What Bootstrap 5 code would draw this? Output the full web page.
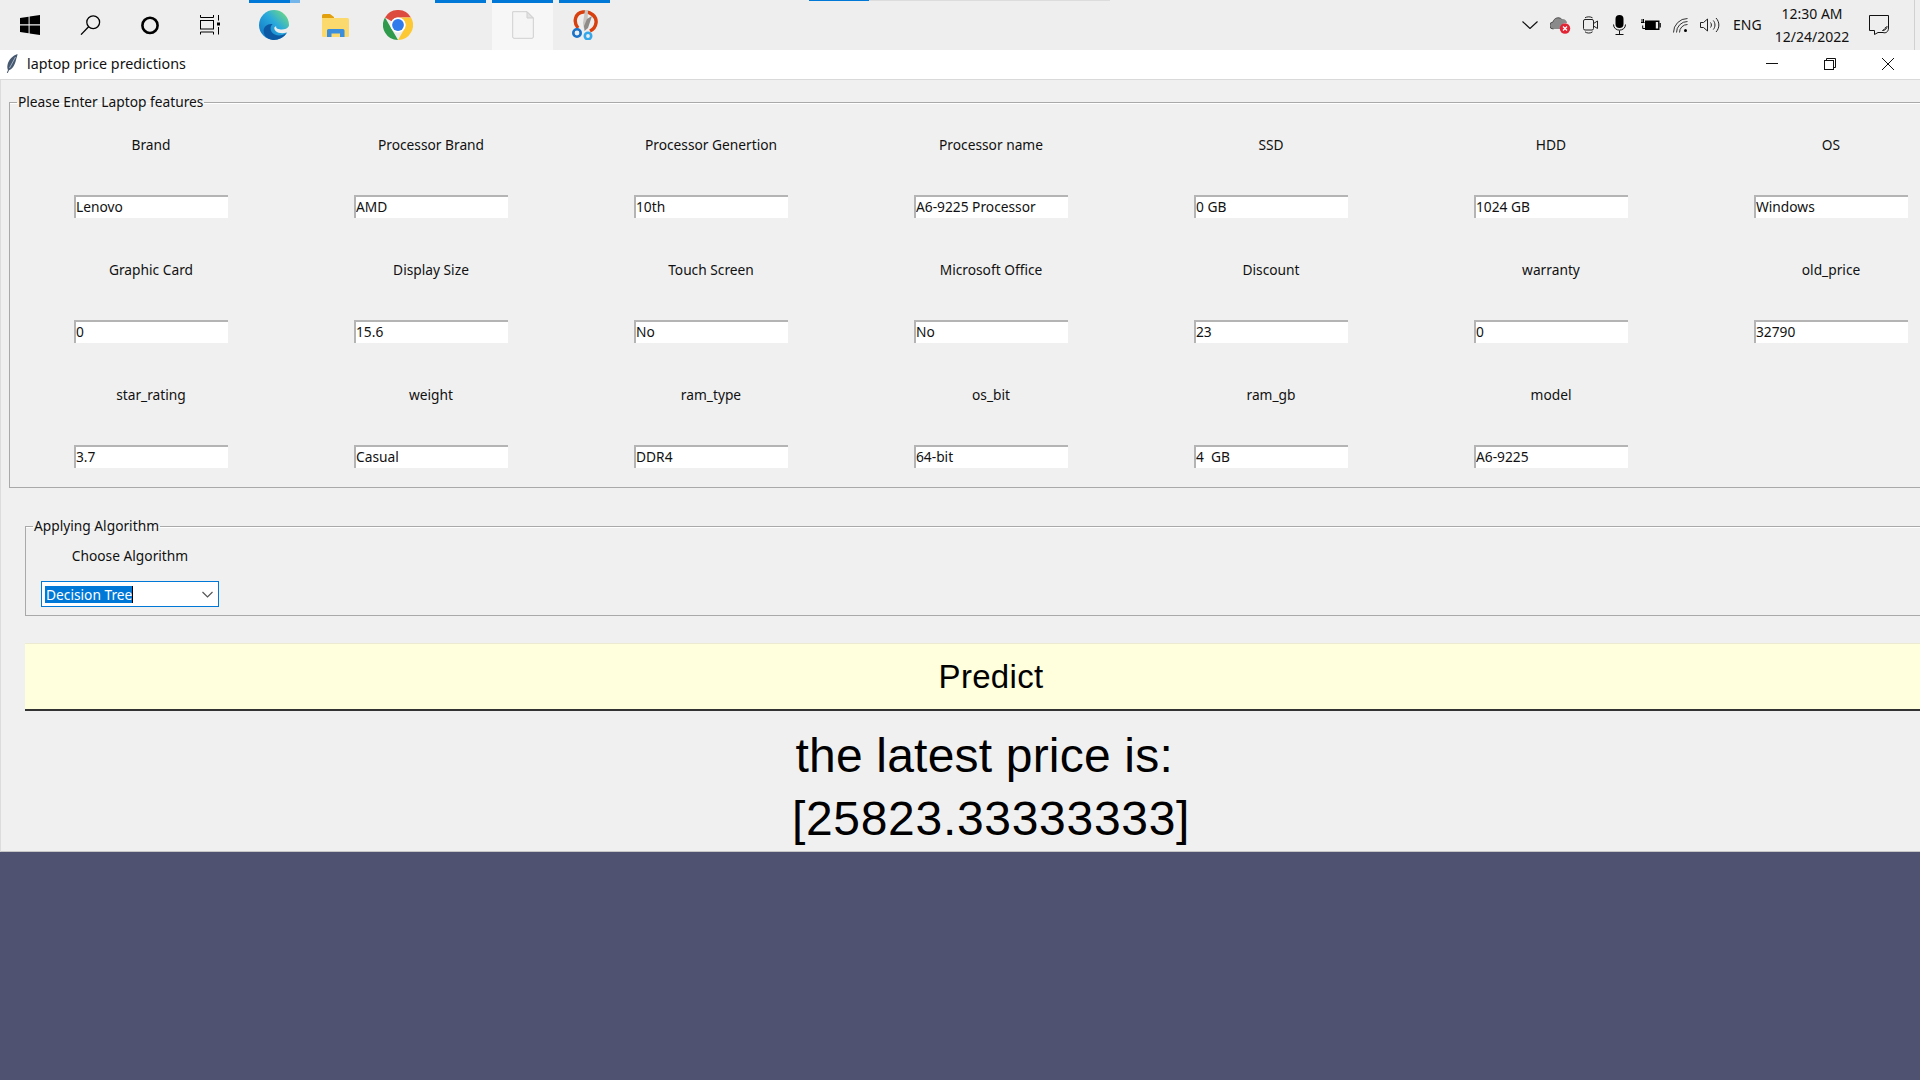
<!DOCTYPE html>
<html lang="en">
<head>
<meta charset="utf-8">
<title>laptop price predictions</title>
<link href="https://cdn.jsdelivr.net/npm/bootstrap@5.3.0/dist/css/bootstrap.min.css" rel="stylesheet">
<style>
html,body{height:100%;overflow:hidden}
body{background:#4f5270;font-family:"Noto Sans","Liberation Sans",sans-serif;font-size:13.75px;color:#111}
.shell{height:1080px;width:1920px}
.taskbar{height:50px;background:#eee;flex:none}
.slot{width:60px;height:50px;flex:none;position:relative}
.slot-app{width:61px}
.slot-first{margin-left:4px;padding-right:1px}
.slot-chrome{padding-left:2px}
.slot-gap{margin-left:3px}
.slot-active{background:#f7f7f7;margin-left:1px}
.slot-snip{margin-left:1px}
.slot-run::before{content:"";position:absolute;left:5px;right:5px;top:0;height:3px;background:#0078d7}
.slot-active::before{left:0;right:0}
.slot-edge::before{background:linear-gradient(90deg,#0078d7 80%,#74b5ea 80%)}
.progress-hint{width:301px;height:1px;margin-left:194px;align-self:flex-start;background:linear-gradient(90deg,#0078d7 60px,#dcdcdc 60px)}
.tray{gap:12px;margin-right:5px;color:#111}
.tray-eng{width:29px;font-size:14px;line-height:1;white-space:nowrap}
.tray-clock{width:80px;margin-left:-2px;font-size:14px;line-height:23px;text-align:center;white-space:nowrap}
.tray-note{margin-left:5px}
.tray-line{width:1px;height:50px;background:#d0d0d0;margin-left:13px}
.titlebar{height:30px;background:#fff;border-bottom:1px solid #d9d9d9;flex:none;padding-bottom:2px}
.title-feather{margin-left:6px;margin-right:9px}
.title-text{font-size:14.3px;line-height:18px;color:#111}
.win-controls{gap:46px;margin-right:26px}
.app-main{width:1920px;height:772px;flex:none;background:#f0f0f0;border-bottom:1px solid #c6c6c6;border-left:1px solid #dcdcdc;overflow:hidden;padding-left:8px}
.etched{border:1px solid #a9a9a9;box-shadow:inset 0 1px 0 #fff;padding:0;margin:0;flex:none;min-width:0}
.etched>legend{float:none;width:auto;font-size:13.75px;line-height:18px;margin:0 0 0 7px;padding:0 1px;color:#111}
.group-features{width:2000px;margin-top:13px;padding:0 0 19px 0}
.feature-grid{display:grid;grid-template-columns:repeat(7,280px);row-gap:43px;padding:25px 0 0 1px}
.feature{display:flex;flex-direction:column;align-items:center}
.feature-label{line-height:18px;height:18px;margin-bottom:41px;white-space:nowrap}
.entry{width:154px;height:23px;border:0;border-top:2px solid #b4b4b4;border-left:2px solid #b4b4b4;background:#fff;padding:0 0 2px 0;font:inherit;color:#111;line-height:19px;border-radius:0;outline:0}
.group-algo{width:1960px;margin:29px 0 0 16px;padding:12px 0 8px 0}
.algo-box{width:178px;margin-left:15px}
.algo-label{line-height:18px;margin-bottom:16px;text-align:center}
.combo{height:26px;border:1px solid #0078d7;background:#fff;padding:0 0 0 3px}
.combo-sel{background:#0078d7;color:#fff;line-height:17px;height:17px;border-right:1px solid #000;padding:0 0 0 1px;white-space:nowrap}
.combo-arrow{margin-left:auto;margin-right:5px}
.predict-col{width:1932px;margin-left:16px;flex:none}
.predict-btn{display:block;width:100%;height:68px;margin-top:27px;border:0;border-top:1px solid #ecead0;border-bottom:2px solid #333;border-radius:0;background:#ffd;color:#000;font-family:"Liberation Sans",Arial,sans-serif;font-size:33px;letter-spacing:.3px;line-height:1;padding:0}
.predict-btn:hover,.predict-btn:active{background:#ffd;color:#000;border-bottom-color:#333}
.result{margin-top:12px;font-family:"Liberation Sans",Arial,sans-serif;font-size:48px;line-height:63px;color:#000;text-align:center;white-space:pre}
.result-a{letter-spacing:.2px;padding-top:1px}
.result-b{letter-spacing:.7px}
.desktop{background:#4f5270}
</style>
</head>
<body>
<div class="shell d-flex flex-column">

  <div class="taskbar d-flex align-items-center">
    <div class="slot d-flex align-items-center justify-content-center">
      <svg width="20" height="20" viewBox="0 0 20 20" aria-label="Start"><path fill="#000" d="M0 3 8.6 1.8V9.3H0ZM9.6 1.6 20 0V9.3H9.6ZM0 10.5H8.6V18.2L0 17ZM9.6 10.5H20V20L9.6 18.4Z"/></svg>
    </div>
    <div class="slot d-flex align-items-center justify-content-center">
      <svg width="21" height="20" viewBox="0 0 21 20" fill="none" stroke="#000" stroke-width="1.3" aria-label="Search"><circle cx="13.2" cy="7.2" r="6.4"/><path d="M8.6 11.8 1 19.6"/></svg>
    </div>
    <div class="slot d-flex align-items-center justify-content-center">
      <svg width="20" height="20" viewBox="0 0 20 20" fill="none" stroke="#000" stroke-width="2.6" aria-label="Cortana"><circle cx="10" cy="10.4" r="7.6"/></svg>
    </div>
    <div class="slot d-flex align-items-center justify-content-center">
      <svg width="20" height="20" viewBox="0 0 20 20" fill="none" stroke="#000" aria-label="Task view"><path d="M.5 0V2.5H13.5V0M.5 19.5V17H13.5V19.5"/><rect x=".5" y="5.5" width="13" height="8.5"/><path d="M18.5 0V5.5M18.5 12V19.5"/><rect x="17" y="7.5" width="3" height="3" fill="#000" stroke="none"/></svg>
    </div>
    <div class="slot slot-app slot-first slot-run slot-edge d-flex align-items-center justify-content-center">
      <svg width="30" height="30" viewBox="0 0 30 30" aria-label="Edge">
        <defs><linearGradient id="edgeA" x1="0" y1="1" x2="1" y2="0"><stop offset="0" stop-color="#0c6fc0"/><stop offset=".55" stop-color="#2aa9dd"/><stop offset="1" stop-color="#80e46f"/></linearGradient></defs>
        <circle cx="15" cy="15" r="15" fill="url(#edgeA)"/>
        <path fill="#eee" d="M30.2 15.5C29 18.8 24.5 20 20.5 19.3 18 18.8 16.5 17.6 17.3 16.2 15 16.4 14.5 19 16.6 20.9 19.6 23.6 25.5 24 30 21.5Z"/>
        <path fill="#0d58a3" d="M27.7 23C24.8 27.5 19.6 30.2 14 29.9 8.4 29.5 4.6 25.6 4.6 20.8 4.6 16.5 8.8 13.2 13.6 14 11.4 15.8 10.8 19.3 12.6 22 15.5 26.2 22.8 26.5 27.7 23Z"/>
      </svg>
    </div>
    <div class="slot slot-app d-flex align-items-center justify-content-center">
      <svg width="27" height="23" viewBox="0 0 27 23" aria-label="File Explorer">
        <path fill="#e2a00e" d="M0 1.5A1.5 1.5 0 0 1 1.5 0H8L12 3V6H0Z"/>
        <path fill="#fbd96c" d="M0 4H25.5A1.5 1.5 0 0 1 27 5.5V21.5A1.5 1.5 0 0 1 25.5 23H1.5A1.5 1.5 0 0 1 0 21.5Z"/>
        <path fill="#3b8edb" d="M5 23V16.5A1.5 1.5 0 0 1 6.5 15H21A1.5 1.5 0 0 1 22.5 16.5V23H18V19.5H9.5V23Z"/>
      </svg>
    </div>
    <div class="slot slot-app slot-chrome d-flex align-items-center justify-content-center">
      <svg width="30" height="30" viewBox="0 0 30 30" aria-label="Chrome">
        <path fill="#dd4b3e" d="M2 7.5A15 15 0 0 1 28 7.5H15A7.5 7.5 0 0 0 8.5 11.3Z"/>
        <path fill="#2f9a4b" d="M2 7.5 8.5 18.8 15 30A15 15 0 0 1 2 7.5Z"/>
        <path fill="#fcc934" d="M28 7.5A15 15 0 0 1 15 30L21.5 18.8A7.5 7.5 0 0 0 21.5 11.2 7.5 7.5 0 0 0 15 7.5Z"/>
        <circle cx="15" cy="15" r="7.6" fill="#fff"/><circle cx="15" cy="15" r="5.9" fill="#2f7bec"/>
      </svg>
    </div>
    <div class="slot slot-app slot-gap slot-run"></div>
    <div class="slot slot-app slot-active slot-run d-flex align-items-center justify-content-center">
      <svg width="22" height="28" viewBox="0 0 22 28" aria-label="Untitled document"><path fill="#f5f5f5" stroke="#cfcfcf" d="M.7.7H15L21.3 7V26A1.3 1.3 0 0 1 20 27.3H2A1.3 1.3 0 0 1 .7 26Z"/><path fill="#e2e2e2" stroke="#cfcfcf" d="M15 .7V7H21.3Z"/></svg>
    </div>
    <div class="slot slot-app slot-snip slot-run d-flex align-items-center justify-content-center">
      <svg width="26" height="30" viewBox="0 0 26 30" fill="none" aria-label="Snipping Tool">
        <path stroke="#d9400f" stroke-width="3.4" d="M6 18C1 12 3 3 11 2 19 1 25 7 24 13 23.500 17 21 19.500 18 21"/>
        <path fill="#c9c5c2" d="M13 0 16 0 15.500 14 12 19 11 13Z"/><path fill="#8f8b88" d="M20 6 16 18 12.500 21 12 16 15 9Z"/>
        <circle cx="5" cy="23" r="3.700" stroke="#1a73c8" stroke-width="2.600"/><circle cx="16" cy="26" r="3.200" stroke="#35a7ea" stroke-width="2.600"/>
      </svg>
    </div>
    <div class="progress-hint"></div>
    <div class="tray d-flex align-items-center ms-auto">
      <svg width="16" height="8" viewBox="0 0 16 8" fill="none" stroke="#111" stroke-width="1.200" aria-label="Show hidden icons"><path d="M.5.5 8 7.500 15.500.5"/></svg>
      <svg width="21" height="18" viewBox="0 0 21 18" aria-label="OneDrive error"><path fill="#8a8a8a" d="M3.500 13A3.500 3.500 0 0 1 3 6C4 2 8.500 .5 11.500 3 14.500 2.500 17 4.500 17 7H14L10 13Z"/><path fill="none" stroke="#444" stroke-width=".9" d="M3.500 13A3.500 3.500 0 0 1 3 6C4 2 8.500 .5 11.500 3"/><circle cx="15" cy="12.500" r="5.200" fill="#e22434"/><path stroke="#fff" stroke-width="1.300" d="M13 10.500 17 14.500M17 10.500 13 14.500"/></svg>
      <svg width="18" height="18" viewBox="0 0 18 18" fill="none" stroke="#222" aria-label="Camera"><rect x=".5" y="3.500" width="10" height="10.500" rx="1.500"/><path d="M10.500 7.500 14.500 5V12.500L10.500 10M2 1.800C4 .5 7.500.5 9.500 1.800M2 15.800C4 17.500 7.500 17.500 9.500 15.800"/></svg>
      <svg width="15" height="20" viewBox="0 0 15 20" aria-label="Microphone"><rect x="2.500" y="0" width="8" height="13" rx="4" fill="#000"/><path fill="none" stroke="#111" d="M.5 9.500C.5 17 12.500 17 12.500 9.500M6.500 15.500V19.500M2.500 19.500H10.500"/></svg>
      <svg width="21" height="14" viewBox="0 0 21 14" aria-label="Battery"><path fill="none" stroke="#000" d="M1 4.500H4.500M2 1V4M3.500 1V4M2.700 7.500V10.500H5"/><rect x="5" y="2.500" width="14.500" height="9.500" fill="#000"/><rect x="19.500" y="5" width="1.300" height="4.500" fill="#000"/><rect x="15.800" y="4" width="2.300" height="6.500" fill="#eee"/></svg>
      <svg width="15" height="15" viewBox="0 0 15 15" fill="none" stroke="#333" aria-label="Wi-Fi"><path d="M.5 14.500A14 14 0 0 1 14.500.5M3.500 14.500A11 11 0 0 1 14.500 3.500M6.500 14.500A8 8 0 0 1 14.500 6.500"/><circle cx="12.500" cy="12.500" r="1.500" fill="#000" stroke="none"/></svg>
      <svg width="21" height="16" viewBox="0 0 21 16" fill="none" stroke="#222" aria-label="Volume"><path d="M.5 5.500H3.500L7.500 2V14L3.500 10.500H.5ZM10.500 5.500C11.700 7 11.700 9 10.500 10.500M13.300 3.500C15.500 6 15.500 10 13.300 12.500M16 1C19.800 5 19.800 11 16 15"/></svg>
      <div class="tray-eng">ENG</div>
      <div class="tray-clock"><div>12:30 AM</div><div>12/24/2022</div></div>
      <svg class="tray-note" width="20" height="20" viewBox="0 0 20 20" fill="none" stroke="#111" aria-label="Notifications"><path d="M.5.500H19.500V13C19.500 17 16.500 18.500 14 17.500H9L5.500 19.500V15.500H.5Z"/><path d="M18 11C18 15 14.500 15.500 13.500 15.500 16 14.500 16.500 13 16.500 12"/></svg>
      <div class="tray-line"></div>
    </div>
  </div>

  <div class="titlebar d-flex align-items-center">
    <svg class="title-feather" width="12" height="19" viewBox="0 0 12 19" aria-label="Tk feather"><path fill="#46586f" d="M11.500 0C7 1.500 2.500 5.500 1.500 11 1 13.500 1.500 15 2 16L.8 18.800 1.800 19 3 16.300C6 15.500 9 11 10 6 10.600 3.500 11.500 1.500 11.500 0Z"/><path stroke="#c5d3e2" stroke-width=".7" d="M9.500 3 3.500 14"/></svg>
    <div class="title-text">laptop price predictions</div>
    <div class="win-controls d-flex align-items-center ms-auto">
      <svg width="12" height="12" viewBox="0 0 12 12" stroke="#111" aria-label="Minimize"><path d="M0 5.500H12"/></svg>
      <svg width="12" height="12" viewBox="0 0 12 12" fill="none" stroke="#111" aria-label="Restore"><rect x=".5" y="2.500" width="9" height="9"/><path d="M2.500 2.500V.5H11.500V9.500H9.500"/></svg>
      <svg width="12" height="12" viewBox="0 0 12 12" stroke="#111" aria-label="Close"><path d="M0 0 12 12M12 0 0 12"/></svg>
    </div>
  </div>

  <main class="app-main d-flex flex-column">
    <fieldset class="etched group-features">
      <legend>Please Enter Laptop features</legend>
      <div class="feature-grid">
        <div class="feature"><label class="feature-label">Brand</label><input class="entry" readonly value="Lenovo"></div>
        <div class="feature"><label class="feature-label">Processor Brand</label><input class="entry" readonly value="AMD"></div>
        <div class="feature"><label class="feature-label">Processor Genertion</label><input class="entry" readonly value="10th"></div>
        <div class="feature"><label class="feature-label">Processor name</label><input class="entry" readonly value="A6-9225 Processor"></div>
        <div class="feature"><label class="feature-label">SSD</label><input class="entry" readonly value="0 GB"></div>
        <div class="feature"><label class="feature-label">HDD</label><input class="entry" readonly value="1024 GB"></div>
        <div class="feature"><label class="feature-label">OS</label><input class="entry" readonly value="Windows"></div>
        <div class="feature"><label class="feature-label">Graphic Card</label><input class="entry" readonly value="0"></div>
        <div class="feature"><label class="feature-label">Display Size</label><input class="entry" readonly value="15.6"></div>
        <div class="feature"><label class="feature-label">Touch Screen</label><input class="entry" readonly value="No"></div>
        <div class="feature"><label class="feature-label">Microsoft Office</label><input class="entry" readonly value="No"></div>
        <div class="feature"><label class="feature-label">Discount</label><input class="entry" readonly value="23"></div>
        <div class="feature"><label class="feature-label">warranty</label><input class="entry" readonly value="0"></div>
        <div class="feature"><label class="feature-label">old_price</label><input class="entry" readonly value="32790"></div>
        <div class="feature"><label class="feature-label">star_rating</label><input class="entry" readonly value="3.7"></div>
        <div class="feature"><label class="feature-label">weight</label><input class="entry" readonly value="Casual"></div>
        <div class="feature"><label class="feature-label">ram_type</label><input class="entry" readonly value="DDR4"></div>
        <div class="feature"><label class="feature-label">os_bit</label><input class="entry" readonly value="64-bit"></div>
        <div class="feature"><label class="feature-label">ram_gb</label><input class="entry" readonly value="4  GB"></div>
        <div class="feature"><label class="feature-label">model</label><input class="entry" readonly value="A6-9225"></div>
      </div>
    </fieldset>

    <fieldset class="etched group-algo">
      <legend>Applying Algorithm</legend>
      <div class="algo-box">
        <div class="algo-label">Choose Algorithm</div>
        <div class="combo d-flex align-items-center">
          <span class="combo-sel">Decision Tree</span>
          <svg class="combo-arrow" width="11" height="7" viewBox="0 0 11 7" fill="none" stroke="#555" stroke-width="1.200" aria-hidden="true"><path d="M.5 1 5.500 6 10.500 1"/></svg>
        </div>
      </div>
    </fieldset>

    <div class="predict-col">
      <button type="button" class="btn predict-btn">Predict</button>
      <div class="result"><div class="result-a">the latest price is: </div><div class="result-b">[25823.33333333]</div></div>
    </div>
  </main>

  <div class="desktop flex-grow-1"></div>
</div>
</body>
</html>
